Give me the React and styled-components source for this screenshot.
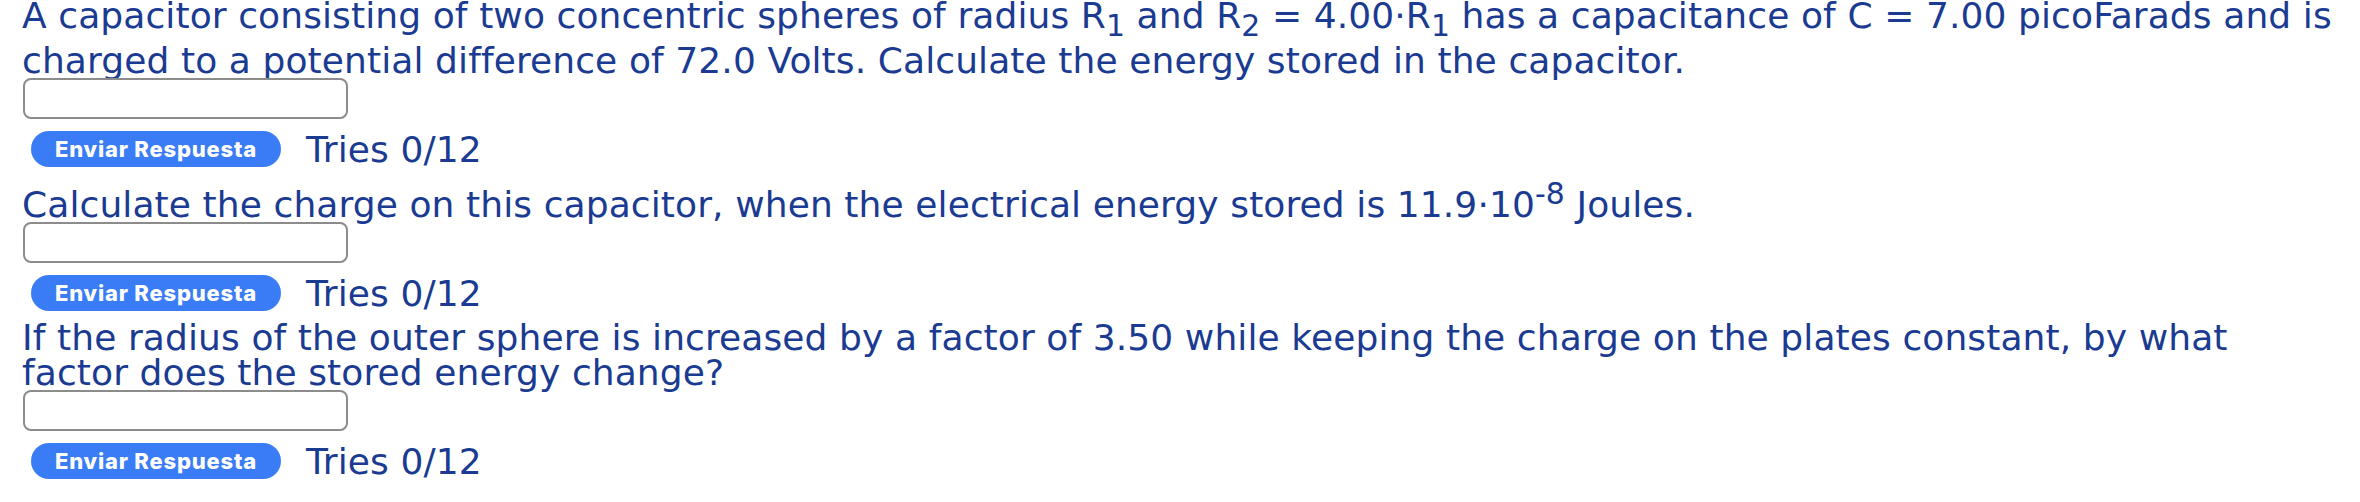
import React from 'react'
import styled, { createGlobalStyle } from 'styled-components'

const GlobalStyle = createGlobalStyle`
  html, body {
    margin: 0;
    padding: 0;
    background: #ffffff;
  }
`

const questions = [
  {
    id: 'energy',
    prompt: (
      <>
        A capacitor consisting of two concentric spheres of radius R<sub>1</sub> and R<sub>2</sub> = 4.00·R<sub>1</sub> has a
        capacitance of C = 7.00 picoFarads and is charged to a potential difference of 72.0 Volts. Calculate the energy
        stored in the capacitor.
      </>
    ),
  },
  {
    id: 'charge',
    prompt: (
      <>
        Calculate the charge on this capacitor, when the electrical energy stored is 11.9·10<sup>-8</sup> Joules.
      </>
    ),
  },
  {
    id: 'factor',
    prompt: (
      <>
        If the radius of the outer sphere is increased by a factor of 3.50 while keeping the charge on the plates
        constant, by what factor does the stored energy change?
      </>
    ),
  },
]

export default function App() {
  return (
    <>
      <GlobalStyle />
      <Page>
        {questions.map((q) => (
          <Question key={q.id}>
            <Prompt>{q.prompt}</Prompt>
            <AnswerInput type="text" />
            <SubmitRow>
              <SubmitButton type="button">Enviar Respuesta</SubmitButton>
              <Tries>Tries 0/12</Tries>
            </SubmitRow>
          </Question>
        ))}
      </Page>
    </>
  )
}

const Page = styled.div`
  display: flex;
  flex-direction: column;
  gap: 9px;
  padding: 0 22px 0 22px;
  margin-top: -2px;
  font-family: "DejaVu Sans", Verdana, sans-serif;
  font-size: 36px;
  line-height: 35px;
  letter-spacing: 0.1px;
  color: #1a3b91;
`

const Question = styled.div`
  display: flex;
  flex-direction: column;
  align-items: flex-start;
`

const Prompt = styled.div`
  sub, sup {
    font-size: 0.83em;
  }
`

const AnswerInput = styled.input`
  box-sizing: border-box;
  width: 325px;
  height: 41px;
  margin: 0 0 0 1px;
  border: 2px solid #8c8c8c;
  border-radius: 8px;
  background: #ffffff;
  outline: none;
`

const SubmitRow = styled.div`
  display: flex;
  align-items: center;
  gap: 25px;
  margin-top: 12px;
  padding-left: 9px;
`

const SubmitButton = styled.button`
  width: 250px;
  height: 36px;
  padding: 0;
  border: none;
  border-radius: 18px;
  background: #3a7cf5;
  color: #ffffff;
  font-family: Inter, "Liberation Sans", sans-serif;
  font-size: 22px;
  font-weight: 800;
  letter-spacing: 0.8px;
`

const Tries = styled.span`
  white-space: nowrap;
`
